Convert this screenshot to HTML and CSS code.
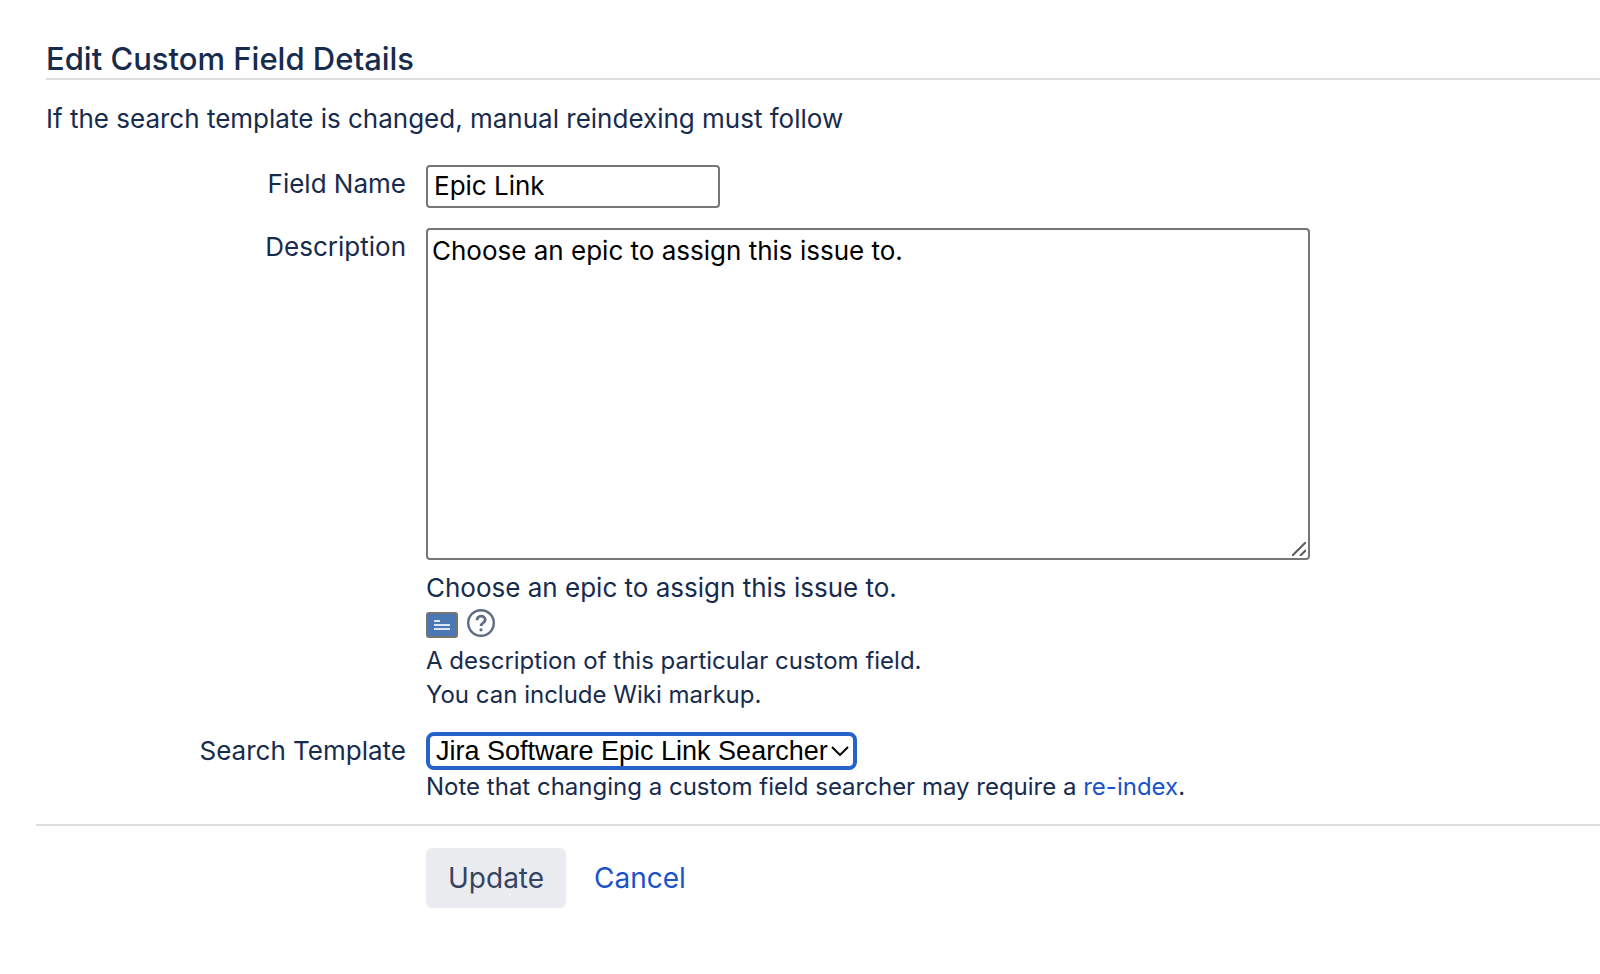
FILE: index.html
```html
<!DOCTYPE html>
<html lang="en">
<head>
  <meta charset="UTF-8">
  <meta name="viewport" content="width=device-width, initial-scale=1">
  <title>Edit Custom Field Details</title>
  <link rel="stylesheet" href="styles.css">
</head>
<body>
  <form class="custom-field-form" action="#" method="post">
    <div class="form-header">
      <h2>Edit Custom Field Details</h2>
    </div>
    <p class="form-intro">If the search template is changed, manual reindexing must follow</p>

    <!-- Field Name -->
    <div class="field-group">
      <label class="field-label" for="name">Field Name</label>
      <div class="field-value">
        <input class="text-field" type="text" id="name" name="name" value="Epic Link">
      </div>
    </div>

    <!-- Description -->
    <div class="field-group">
      <label class="field-label" for="description">Description</label>
      <div class="field-value">
        <div class="text-area-wrap">
          <textarea class="text-area" id="description" name="description">Choose an epic to assign this issue to.</textarea>
          <svg class="grip" width="14" height="14" viewBox="0 0 14 14">
            <path d="M0 14L14 0M8 14l6-6" fill="none" stroke="#5a5a5a" stroke-width="2"/>
          </svg>
        </div>
        <div class="preview">Choose an epic to assign this issue to.</div>
        <div class="field-tools">
          <button type="button" class="tool preview-link" aria-label="Preview">
            <svg width="32" height="26" viewBox="0 0 32 26">
              <rect x="1" y="1" width="30" height="24" rx="2" fill="#4a78b5" stroke="#77736d" stroke-width="2"/>
              <path d="M8 9h6M8 13h16M8 17h16" stroke="#dce6f2" stroke-width="2" fill="none"/>
            </svg>
          </button>
          <a href="#" class="tool help-link" aria-label="Help">
            <svg width="28" height="29" viewBox="0 0 28 29">
              <circle cx="14" cy="14" r="12.8" fill="none" stroke="#5e6c84" stroke-width="2.4"/>
              <path d="M10 11.2c0-2.4 1.7-4.1 4.1-4.1s4.1 1.6 4.1 3.8c0 3-4.2 2.9-4.2 6" fill="none" stroke="#5e6c84" stroke-width="2.8"/>
              <circle cx="14" cy="20.8" r="1.6" fill="#5e6c84"/>
            </svg>
          </a>
        </div>
        <div class="description">A description of this particular custom field.<br>You can include Wiki markup.</div>
      </div>
    </div>

    <!-- Search Template -->
    <div class="field-group">
      <label class="field-label" for="searcher">Search Template</label>
      <div class="field-value">
        <div class="select-wrap">
          <select class="select" id="searcher" name="searcher">
            <option selected>Jira Software Epic Link Searcher</option>
          </select>
          <svg class="select-arrow" width="18" height="10" viewBox="0 0 18 10">
            <path d="M1 1l8 8 8-8" fill="none" stroke="#000" stroke-width="2"/>
          </svg>
        </div>
        <div class="description">Note that changing a custom field searcher may require a <a href="#">re-index</a>.</div>
      </div>
    </div>

    <div class="form-buttons">
      <button type="submit" class="update-button">Update</button>
      <a href="#" class="cancel">Cancel</a>
    </div>
  </form>
</body>
</html>
```
FILE: styles.css
```css
body {
  margin: 0;
  background-color: #fff;
  color: #172b4d;
  font-family: Inter, 'Liberation Sans', sans-serif;
  font-size: 26px;
  line-height: 38px;
}

a {
  color: #1a53c9;
  text-decoration: none;
}

a:hover {
  text-decoration: underline;
}

.custom-field-form {
  padding: 40px 0 0 36px;
}

.form-header {
  margin-left: 10px;
  border-bottom: 2px solid #ddd;
}

.form-header h2 {
  margin: 0;
  font-size: 31px;
  font-weight: 500;
  line-height: 38px;
}

.form-intro {
  margin: 20px 0 27px 10px;
}

.field-group {
  display: grid;
  grid-template-columns: 370px 1fr;
  column-gap: 20px;
  margin-bottom: 20px;
}

.field-label {
  text-align: right;
}

.field-value {
  display: flex;
  flex-direction: column;
  align-items: flex-start;
}

.text-field,
.text-area {
  box-sizing: border-box;
  max-width: 100%;
  border: 2px solid #767676;
  border-radius: 4px;
  background-color: #fff;
  color: #000;
  font-family: inherit;
  font-size: 26px;
}

.text-field {
  width: 294px;
  height: 43px;
  padding: 0 6px 2px;
}

.text-area-wrap {
  position: relative;
  max-width: 100%;
}

.text-area {
  display: block;
  width: 884px;
  height: 332px;
  padding: 4px;
  line-height: 34px;
  resize: none;
}

/* Resize grip in the corner of the textarea */
.grip {
  position: absolute;
  right: 4px;
  bottom: 4px;
  pointer-events: none;
}

.preview {
  margin-top: 9px;
}

.field-tools {
  display: flex;
  align-items: flex-end;
  gap: 9px;
  height: 31px;
  margin-bottom: 6px;
}

.tool {
  display: flex;
  padding: 0;
  border: none;
  background: none;
  cursor: pointer;
}

.description {
  font-size: 24px;
  line-height: 34px;
}

.select-wrap {
  position: relative;
}

.select {
  display: block;
  width: 431px;
  height: 38px;
  padding: 0 20px 0 6px;
  border: 4px solid #2563cb;
  border-radius: 8px;
  outline: none;
  appearance: none;
  background-color: #fff;
  color: #000;
  font-family: 'Liberation Sans', Arial, sans-serif;
  font-size: 27px;
}

/* Arrow sits over the select */
.select-arrow {
  position: absolute;
  top: 14px;
  right: 8px;
  pointer-events: none;
}

.form-buttons {
  display: flex;
  align-items: center;
  gap: 8px;
  padding: 22px 0 0 390px;
  border-top: 2px solid #ddd;
  font-size: 28px;
}

.update-button {
  height: 60px;
  padding: 0 22px;
  border: none;
  border-radius: 6px;
  background-color: #ebecf0;
  color: #344563;
  font-family: inherit;
  font-size: 28px;
  cursor: pointer;
}

.update-button:hover {
  background-color: #dfe1e6;
}

.cancel {
  padding: 0 20px;
}
```
